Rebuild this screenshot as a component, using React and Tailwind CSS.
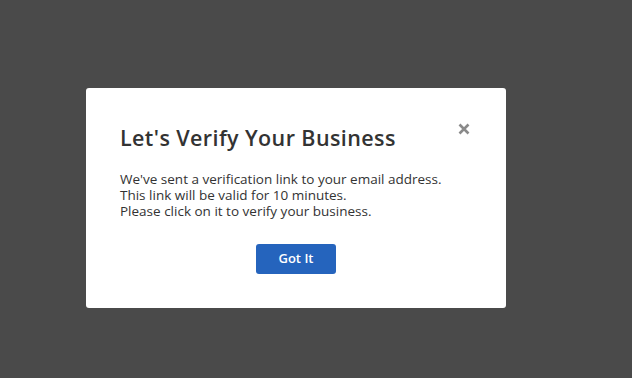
export default function App() {
  return (
    <div className="w-[632px] h-[378px] bg-[#4a4a4a] flex items-start pl-[86px] pt-[88px]" style={{ fontFamily: "'Open Sans', Lato, sans-serif" }}>
      <div className="relative w-[420px] h-[220px] bg-white rounded-[3px] pl-[34px] pr-[34px] pt-[35px]">
        <button className="absolute right-[35px] top-[34px] w-[14px] h-[14px] flex items-center justify-center text-[#8a8a8a]">
          <svg viewBox="0 0 12 12" className="w-[12px] h-[12px]">
            <path d="M1.5 1.5 L10.5 10.5 M10.5 1.5 L1.5 10.5" stroke="currentColor" strokeWidth="2.6" strokeLinecap="butt" />
          </svg>
        </button>
        <h1 className="text-[21.5px] leading-[30px] font-semibold text-[#333333] tracking-[0.4px]">Let's Verify Your Business</h1>
        <div className="mt-[18px] text-[13.5px] leading-[16px] text-[#333333]">
          <p>We've sent a verification link to your email address.</p>
          <p>This link will be valid for 10 minutes.</p>
          <p>Please click on it to verify your business.</p>
        </div>
        <div className="flex justify-center mt-[25px]">
          <button className="w-[80px] h-[30px] bg-[#2564bd] rounded-[3px] text-white text-[13px] font-semibold">Got It</button>
        </div>
      </div>
    </div>
  );
}
